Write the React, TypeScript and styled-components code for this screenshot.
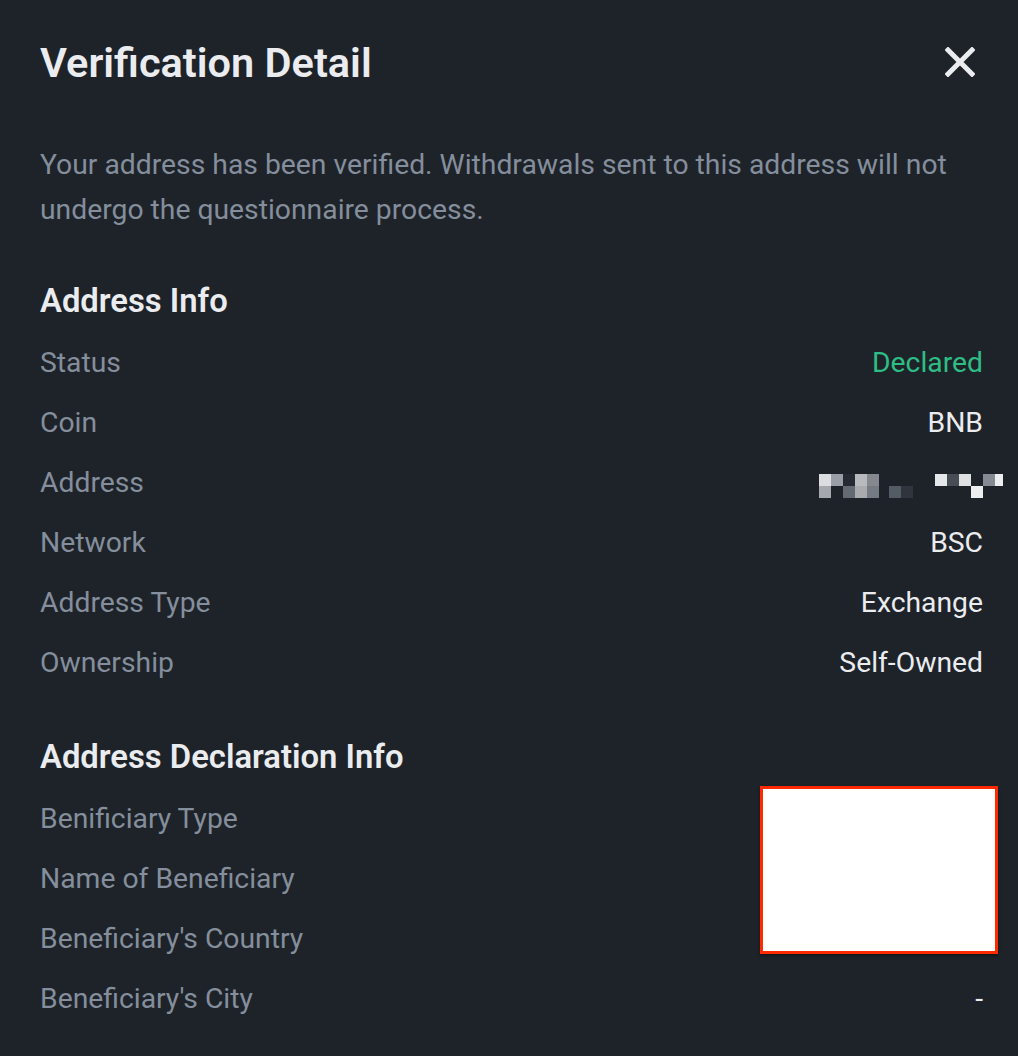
import styled, { createGlobalStyle } from 'styled-components';

const GlobalStyle = createGlobalStyle`
  body {
    margin: 0;
    background: #1e2329;
  }
`;

const Panel = styled.div`
  width: 1018px;
  height: 1056px;
  box-sizing: border-box;
  padding: 0 35px 0 40px;
  background: #1e2329;
  font-family: Roboto, 'Noto Sans', sans-serif;
  overflow: hidden;
`;

const Header = styled.div`
  display: flex;
  justify-content: space-between;
  align-items: center;
  height: 124px;
`;

const Title = styled.h1`
  margin: 0;
  font-size: 41.5px;
  font-weight: 600;
  color: #eaecef;
`;

const CloseButton = styled.button`
  display: flex;
  padding: 0;
  margin-right: 8px;
  border: none;
  background: none;
  cursor: pointer;
`;

const Description = styled.p`
  margin: 18px 0 0;
  font-size: 28.3px;
  line-height: 45px;
  color: #848e9c;
`;

const SectionTitle = styled.h2<{ $gap: number }>`
  margin: ${(p) => p.$gap}px 0 0;
  font-size: 32.8px;
  font-weight: 600;
  line-height: 62px;
  color: #eaecef;
`;

const Rows = styled.div`
  position: relative;
`;

const Row = styled.div`
  display: flex;
  justify-content: space-between;
  align-items: center;
  height: 60px;
  font-size: 28.3px;
`;

const Label = styled.span`
  color: #848e9c;
`;

const Value = styled.span<{ $tone?: 'green' }>`
  color: ${(p) => (p.$tone === 'green' ? '#2ebd85' : '#eaecef')};
`;

const Mosaic = styled.svg`
  margin-right: -20px;
  margin-top: 8px;
`;

const Redaction = styled.div`
  position: absolute;
  top: -2px;
  right: -15px;
  width: 238px;
  height: 168px;
  box-sizing: border-box;
  border: 3px solid #ff2a00;
  background: #ffffff;
  box-shadow: 0 2px 3px rgba(0, 0, 0, 0.35);
`;

const CloseIcon = () => (
  <svg width="30" height="30" viewBox="0 0 30 30">
    <path d="M3 3 L27 27 M27 3 L3 27" stroke="#eaecef" strokeWidth="5" strokeLinecap="square" />
  </svg>
);

// pixelated address: [x, y, colour]
const tiles: [number, number, string][] = [
  [0, 0, '#dcdde0'], [12, 0, '#9a9ea6'], [24, 0, '#262b33'], [36, 0, '#b8babe'], [48, 0, '#85898f'],
  [0, 12, '#a5a8ad'], [24, 12, '#646a74'], [36, 12, '#a9abaf'], [48, 12, '#767a82'],
  [70, 12, '#555b65'], [82, 12, '#30353d'],
  [116, 0, '#e6e7e9'], [128, 0, '#474c55'], [140, 0, '#dfe0e2'], [164, 0, '#868a92'], [176, 0, '#eceef0'],
  [152, 12, '#eceef0'],
];

const AddressMosaic = () => (
  <Mosaic width="184" height="24" viewBox="0 0 184 24">
    {tiles.map(([x, y, c], i) => (
      <rect key={i} x={x} y={y} width={x === 176 ? 8 : 12} height="12" fill={c} />
    ))}
  </Mosaic>
);

const addressInfo: { label: string; value: string; tone?: 'green' }[] = [
  { label: 'Status', value: 'Declared', tone: 'green' },
  { label: 'Coin', value: 'BNB' },
  { label: 'Address', value: '' },
  { label: 'Network', value: 'BSC' },
  { label: 'Address Type', value: 'Exchange' },
  { label: 'Ownership', value: 'Self-Owned' },
];

const declarationInfo = [
  { label: 'Benificiary Type', value: '' },
  { label: 'Name of Beneficiary', value: '' },
  { label: "Beneficiary's Country", value: '' },
  { label: "Beneficiary's City", value: '-' },
];

const App = () => {
  return (
    <>
      <GlobalStyle />
      <Panel>
        <Header>
          <Title>Verification Detail</Title>
          <CloseButton aria-label="Close">
            <CloseIcon />
          </CloseButton>
        </Header>
        <Description>
          Your address has been verified. Withdrawals sent to this address will not undergo the
          questionnaire process.
        </Description>

        <SectionTitle $gap={38}>Address Info</SectionTitle>
        <Rows>
          {addressInfo.map((row) => (
            <Row key={row.label}>
              <Label>{row.label}</Label>
              {row.label === 'Address' ? (
                <AddressMosaic />
              ) : (
                <Value $tone={row.tone}>{row.value}</Value>
              )}
            </Row>
          ))}
        </Rows>

        <SectionTitle $gap={34}>Address Declaration Info</SectionTitle>
        <Rows>
          {declarationInfo.map((row) => (
            <Row key={row.label}>
              <Label>{row.label}</Label>
              <Value>{row.value}</Value>
            </Row>
          ))}
          <Redaction />
        </Rows>
      </Panel>
    </>
  );
};

export default App;
